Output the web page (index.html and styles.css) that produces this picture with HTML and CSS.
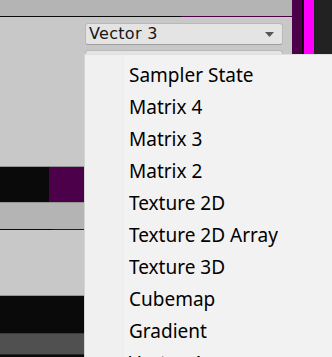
FILE: index.html
```html
<!DOCTYPE html>
<html>
<head>
<meta charset="utf-8">
<link rel="stylesheet" href="styles.css">
</head>
<body>
<div class="screen">
  <div class="graph">
    <div class="header"></div>
    <div class="edge edge-top"><span class="edge-dark e1"></span><span class="edge-purple"></span></div>
    <div class="panel panel-a">
      <div class="field dropdown">
        <span class="field-text">Vector 3</span>
        <svg class="arrow" width="9" height="5" viewBox="0 0 9 5"><path d="M0 0H9L4.5 5Z" fill="#575757"/></svg>
      </div>
      <div class="field field-2"></div>
    </div>
    <div class="rule"></div>
    <div class="band"><span class="band-dark b1"></span><span class="band-purple"></span></div>
    <div class="rule"></div>
    <div class="header header-b"></div>
    <div class="edge"><span class="edge-dark e2"></span><span class="edge-purple"></span></div>
    <div class="panel panel-b"></div>
    <div class="rule"></div>
    <div class="black-band"></div>
    <div class="rule rule-dark"></div>
    <div class="grey-band"></div>
    <div class="rule rule-darker"></div>
    <div class="black-band tail"></div>
  </div>
  <div class="strips">
    <div class="strip s-purple"></div>
    <div class="strip s-black"></div>
    <div class="strip s-magenta"></div>
    <div class="strip s-dark"></div>
  </div>
  <div class="menu">
    <div class="gutter"></div>
    <ul class="items">
      <li>Sampler State</li>
      <li>Matrix 4</li>
      <li>Matrix 3</li>
      <li>Matrix 2</li>
      <li>Texture 2D</li>
      <li>Texture 2D Array</li>
      <li>Texture 3D</li>
      <li>Cubemap</li>
      <li>Gradient</li>
      <li>Vector 4</li>
    </ul>
  </div>
</div>
</body>
</html>
```

FILE: styles.css
```css
html, body {
  margin: 0;
  padding: 0;
}
body {
  width: 332px;
  height: 357px;
  overflow: hidden;
  background: #c8c8c8;
}
.screen {
  position: relative;
  display: flex;
  width: 332px;
  height: 357px;
  overflow: hidden;
}
.graph {
  width: 292px;
  display: flex;
  flex-direction: column;
  flex: none;
}
.header {
  height: 16px;
  background: #b4b4b4;
  flex: none;
}
.header-b {
  height: 26px;
}
.edge {
  height: 1px;
  display: flex;
  flex: none;
}
.edge-dark {
  background: #0a0a0a;
}
.e1 { width: 181px; }
.e2 { width: 52px; }
.edge-purple {
  flex: 1;
  background: #4b0049;
}
.panel {
  background: #c8c8c8;
  flex: none;
}
.panel-a {
  height: 149px;
  padding: 6px 0 0 85px;
  box-sizing: border-box;
  display: flex;
  flex-direction: column;
  gap: 5px;
}
.panel-b {
  height: 65px;
}
.field {
  width: 198px;
  height: 22px;
  box-sizing: border-box;
  background: #e4e4e4;
  border: 1px solid #b9b9b9;
  border-bottom-color: #9f9f9f;
  border-radius: 3px;
  flex: none;
}
.dropdown {
  display: flex;
  align-items: center;
  padding: 0 8px 0 3px;
}
.field-text {
  flex: 1;
  font-family: "DejaVu Sans", sans-serif;
  font-size: 16px;
  letter-spacing: 0.3px;
  color: #161616;
  line-height: 20px;
}
.arrow {
  display: block;
  margin-top: 1px;
}
.rule {
  height: 1px;
  background: #959595;
  flex: none;
}
.rule-dark { background: #3c3c3c; }
.rule-darker { background: #262626; }
.band {
  height: 35px;
  display: flex;
  flex: none;
}
.band-dark {
  width: 49px;
  background: #0a0a0a;
}
.band-purple {
  flex: 1;
  background: #4b0049;
}
.black-band {
  height: 37px;
  background: #0a0a0a;
  flex: none;
}
.grey-band {
  height: 20px;
  background: #505050;
  flex: none;
}
.tail {
  height: 10px;
}
.strips {
  display: flex;
  flex: 1;
  height: 60px;
}
.strip { height: 100%; }
.s-purple { width: 10px; background: #4b0049; }
.s-black { width: 2px; background: #0a0a0a; }
.s-magenta { width: 10px; background: #ff00ff; }
.s-dark { flex: 1; background: #222222; }
.menu {
  position: absolute;
  left: 84px;
  top: 54px;
  right: 0;
  bottom: 0;
  background: #f2f2f2;
  border-left: 1px solid #d6d6d6;
  border-top: 1px solid #e0e0e0;
  display: flex;
}
.gutter {
  width: 38px;
  background: #f0f0f0;
  border-right: 1px solid #ececec;
  flex: none;
}
.items {
  list-style: none;
  margin: 0;
  padding: 4px 0 0 5px;
  font-family: "Noto Sans", sans-serif;
  font-size: 19px;
  line-height: 32px;
  color: #000;
  white-space: nowrap;
}
```
